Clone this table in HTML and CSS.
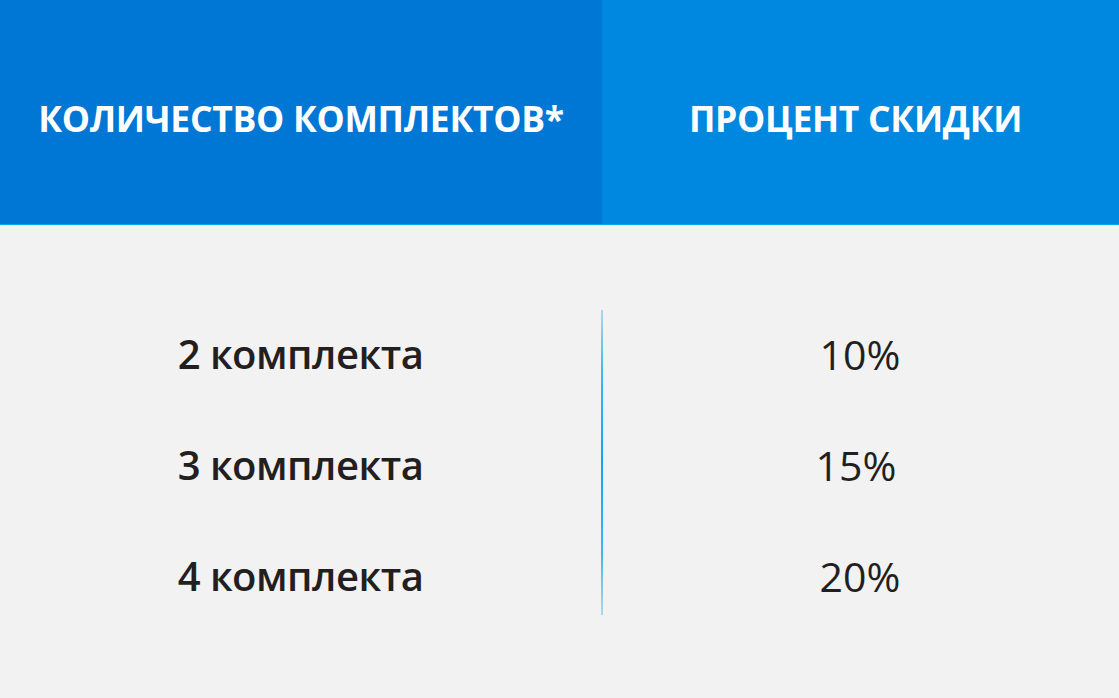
FILE: index.html
```html
<!DOCTYPE html>
<html lang="ru">
<head>
<meta charset="utf-8">
<link rel="stylesheet" href="styles.css">
</head>
<body>
<div class="table">
  <div class="head">
    <div class="hcell hleft">КОЛИЧЕСТВО КОМПЛЕКТОВ*</div>
    <div class="hcell hright">ПРОЦЕНТ СКИДКИ</div>
  </div>
  <div class="body">
    <div class="col cleft">
      <div class="item">2 комплекта</div>
      <div class="item">3 комплекта</div>
      <div class="item">4 комплекта</div>
    </div>
    <div class="divider"></div>
    <div class="col cright">
      <div class="item pct">10%</div>
      <div class="item pct p15">15%</div>
      <div class="item pct">20%</div>
    </div>
  </div>
</div>
</body>
</html>
```
FILE: styles.css
```css
html, body {
  margin: 0;
  padding: 0;
  background: #f2f2f2;
}
.table {
  width: 1119px;
  height: 698px;
  font-family: "Open Sans", "Liberation Sans", sans-serif;
  background: #f2f2f2;
}
.head {
  display: flex;
  height: 224px;
  border-bottom: 1px solid #00a8ec;
}
.hcell {
  display: flex;
  align-items: center;
  justify-content: center;
  color: #ffffff;
  font-weight: 700;
  font-size: 35.5px;
  letter-spacing: -0.3px;
  padding-top: 12px;
  box-sizing: border-box;
}
.hleft {
  width: 602px;
  background: #0077d5;
}
.hright {
  flex: 1;
  background: #0087e0;
  padding-right: 10px;
}
.body {
  display: flex;
  padding-top: 85px;
}
.col {
  display: flex;
  flex-direction: column;
}
.cleft {
  width: 601px;
  align-items: center;
}
.cright {
  flex: 1;
  align-items: center;
}
.item {
  height: 111px;
  display: flex;
  align-items: center;
  justify-content: center;
  font-size: 40px;
  font-weight: 600;
  color: #231f20;
  letter-spacing: -0.5px;
  padding-bottom: 24px;
  box-sizing: border-box;
}
.pct {
  font-weight: 400;
  font-size: 41px;
  letter-spacing: 0;
  padding-right: 2px;
}
.p15 {
  padding-right: 10px;
}
.divider {
  width: 2px;
  height: 305px;
  background: linear-gradient(to bottom, #a8d8f0 0%, #48b4ea 20%, #1aa3ea 50%, #48b4ea 80%, #a8d8f0 100%);
}
```
